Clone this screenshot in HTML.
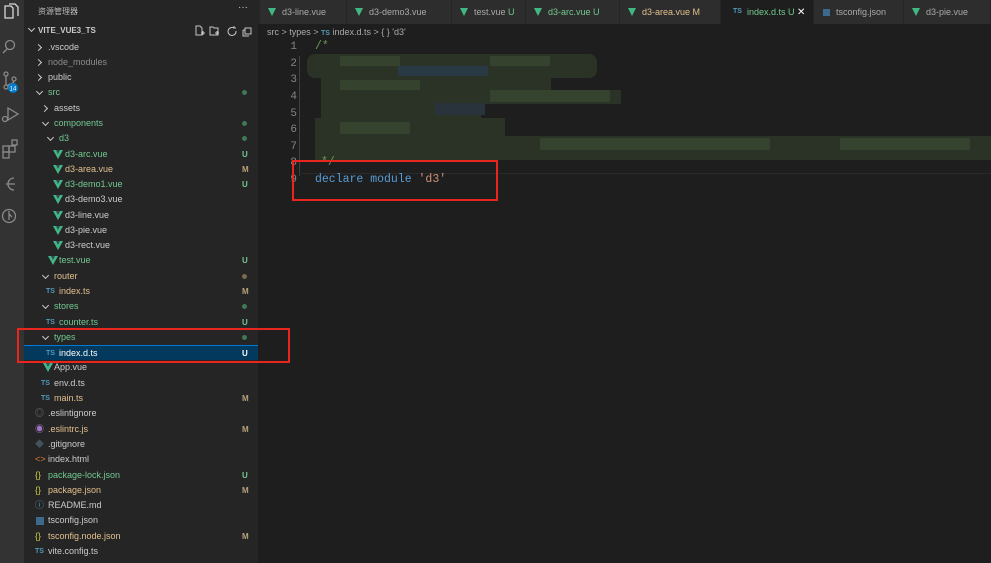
<!DOCTYPE html>
<html><head><meta charset="utf-8"><style>
*{margin:0;padding:0;box-sizing:border-box}
body{width:991px;height:563px;overflow:hidden;background:#1e1e1e;font-family:"Liberation Sans","Noto Sans CJK SC",sans-serif;font-size:9px;color:#ccc;position:relative}
.abs{position:absolute}
#act{left:0;top:0;width:24px;height:563px;background:#333}
#side{left:24px;top:0;width:234px;height:563px;background:#252526}
.r{position:absolute;left:24px;width:234px;height:15px;line-height:15px;white-space:nowrap}
.ch{position:absolute;width:5px;height:5px;border-right:1px solid #ccc;border-bottom:1px solid #ccc}
.ch.o{transform:rotate(45deg);top:4px}
.ch.c{transform:rotate(-45deg);top:5px}
.t{position:absolute;top:0}
.g{color:#73c991}.m{color:#e2c08d}.d{color:#8c8c8c}
.b{position:absolute;left:218px;font-size:8px;font-weight:bold}
.dot{position:absolute;left:218px;top:5px;width:5px;height:5px;border-radius:50%;background:#3e7a52}
.dot.y{background:#7a6a4e}
.v{position:absolute;top:3px;width:0;height:0;border-left:5px solid transparent;border-right:5px solid transparent;border-top:9px solid #41b883}
.v::after{content:"";position:absolute;left:-2px;top:-9px;border-left:2px solid transparent;border-right:2px solid transparent;border-top:4px solid #35495e}
.ts{position:absolute;top:0;font-size:7px;font-weight:bold;color:#519aba}
.tab{position:absolute;top:0;height:24px;line-height:24px;background:#2d2d2d;border-right:1px solid #252526;font-size:9px;color:#aaa;padding-left:22px}
.tab .v{left:8px;top:8px;border-left-width:4px;border-right-width:4px;border-top-width:8px}
.tab .v::after{display:none}
.ln{position:absolute;left:270px;width:27px;text-align:right;color:#858585;font-family:"Liberation Mono",monospace;font-size:11px}
.code{position:absolute;left:315px;font-family:"Liberation Mono",monospace;font-size:11.5px}
.bl{position:absolute;background:#2a3326}
.bk{position:absolute;background:#35432e}
</style></head><body>
<div id="act" class="abs"></div>
<svg class="abs" style="left:0;top:0" width="24" height="240">
<g fill="none" stroke="#d7d7d7" stroke-width="1.3"><path d="M5 6h6l2 2v10H5z M9 4h6l3 3v9"/></g>
<g fill="none" stroke="#8a8a8a" stroke-width="1.3">
<circle cx="10" cy="45" r="4.5"/><path d="M7 49l-4 4"/>
<circle cx="6" cy="74" r="2"/><circle cx="6" cy="87" r="2"/><circle cx="14" cy="79" r="2"/><path d="M6 76v9M14 81c0 3-6 3-7 5"/>
<path d="M8 108l10 6-10 6z"/><circle cx="5" cy="119" r="2.5"/>
<rect x="3" y="146" width="6" height="6"/><rect x="9" y="146" width="6" height="6"/><rect x="3" y="152" width="6" height="6"/><rect x="12" y="140" width="5" height="5"/>
<path d="M14 178a6 6 0 1 0 0 12M6 184h9"/>
<circle cx="9" cy="216" r="6.5"/><path d="M9 211v9M9 214l3 3"/>
</g>
<circle cx="13" cy="88" r="5" fill="#007acc"/><text x="13" y="90.5" font-size="6" fill="#fff" text-anchor="middle" font-family="Liberation Sans">14</text>
</svg>
<div id="side" class="abs"></div>
<div class="abs" style="left:38px;top:6px;font-size:8px;color:#bbb">资源管理器</div>
<div class="abs" style="left:238px;top:2px;color:#ccc;font-size:10px">···</div>
<div class="ch o abs" style="left:29px;top:26px;border-color:#ccc"></div>
<div class="abs" style="left:38px;top:26px;font-size:8px;font-weight:bold;color:#ccc">VITE_VUE3_TS</div>
<svg class="abs" style="left:193px;top:24px" width="60" height="14"><g fill="none" stroke="#c5c5c5" stroke-width="1"><path d="M3 2h4l2 2v7H3z M8 9h4M10 7v4"/><path d="M17 3h3l1 1h4v7h-8z M22 9h4M24 7v4"/><path d="M41 4a4 4 0 1 0 2 3M41 2v2h2"/><path d="M52 4h6v6h-6zM50 6h2M50 6v6h6"/></g></svg>
<div class="r" style="top:40px"><div class="ch c" style="left:12px"></div><span class="t" style="left:24px">.vscode</span></div>
<div class="r" style="top:55px"><div class="ch c" style="left:12px"></div><span class="t d" style="left:24px">node_modules</span></div>
<div class="r" style="top:70px"><div class="ch c" style="left:12px"></div><span class="t" style="left:24px">public</span></div>
<div class="r g" style="top:85px"><div class="ch o" style="left:13px;border-color:#ccc"></div><span class="t" style="left:24px">src</span><div class="dot"></div></div>
<div class="r" style="top:101px"><div class="ch c" style="left:18px"></div><span class="t" style="left:30px">assets</span></div>
<div class="r g" style="top:116px"><div class="ch o" style="left:19px"></div><span class="t" style="left:30px">components</span><div class="dot"></div></div>
<div class="r g" style="top:131px"><div class="ch o" style="left:24px"></div><span class="t" style="left:35px">d3</span><div class="dot"></div></div>
<div class="r g" style="top:147px"><div class="v" style="left:29px"></div><span class="t" style="left:41px">d3-arc.vue</span><span class="b">U</span></div>
<div class="r m" style="top:162px"><div class="v" style="left:29px"></div><span class="t" style="left:41px">d3-area.vue</span><span class="b" style="color:#b8a27a">M</span></div>
<div class="r g" style="top:177px"><div class="v" style="left:29px"></div><span class="t" style="left:41px">d3-demo1.vue</span><span class="b">U</span></div>
<div class="r" style="top:192px"><div class="v" style="left:29px"></div><span class="t" style="left:41px">d3-demo3.vue</span></div>
<div class="r" style="top:208px"><div class="v" style="left:29px"></div><span class="t" style="left:41px">d3-line.vue</span></div>
<div class="r" style="top:223px"><div class="v" style="left:29px"></div><span class="t" style="left:41px">d3-pie.vue</span></div>
<div class="r" style="top:238px"><div class="v" style="left:29px"></div><span class="t" style="left:41px">d3-rect.vue</span></div>
<div class="r g" style="top:253px"><div class="v" style="left:24px"></div><span class="t" style="left:35px">test.vue</span><span class="b">U</span></div>
<div class="r m" style="top:269px"><div class="ch o" style="left:19px"></div><span class="t" style="left:30px">router</span><div class="dot y"></div></div>
<div class="r m" style="top:284px"><span class="ts" style="left:22px">TS</span><span class="t" style="left:35px">index.ts</span><span class="b" style="color:#b8a27a">M</span></div>
<div class="r g" style="top:299px"><div class="ch o" style="left:19px"></div><span class="t" style="left:30px">stores</span><div class="dot"></div></div>
<div class="r g" style="top:315px"><span class="ts" style="left:22px">TS</span><span class="t" style="left:35px">counter.ts</span><span class="b">U</span></div>
<div class="r g" style="top:330px"><div class="ch o" style="left:19px"></div><span class="t" style="left:30px">types</span><div class="dot"></div></div>
<div class="r" style="top:345px;background:#04395e;border-top:1px solid #0078d4;color:#fff"><span class="ts" style="left:22px">TS</span><span class="t" style="left:35px">index.d.ts</span><span class="b" style="color:#fff">U</span></div>
<div class="r" style="top:360px"><div class="v" style="left:19px"></div><span class="t" style="left:30px">App.vue</span></div>
<div class="r" style="top:376px"><span class="ts" style="left:17px">TS</span><span class="t" style="left:30px">env.d.ts</span></div>
<div class="r m" style="top:391px"><span class="ts" style="left:17px">TS</span><span class="t" style="left:30px">main.ts</span><span class="b" style="color:#b8a27a">M</span></div>
<div class="r" style="top:406px"><span class="t" style="left:11px;color:#777">◎</span><span class="t" style="left:24px">.eslintignore</span></div>
<div class="r m" style="top:422px"><span class="t" style="left:11px;color:#a074c4">◉</span><span class="t" style="left:24px">.eslintrc.js</span><span class="b" style="color:#b8a27a">M</span></div>
<div class="r" style="top:437px"><span class="t" style="left:11px;color:#41535b">◆</span><span class="t" style="left:24px">.gitignore</span></div>
<div class="r" style="top:452px"><span class="t" style="left:11px;color:#e37933">&lt;&gt;</span><span class="t" style="left:24px">index.html</span></div>
<div class="r g" style="top:468px"><span class="t" style="left:11px;color:#cbcb41">{}</span><span class="t" style="left:24px">package-lock.json</span><span class="b">U</span></div>
<div class="r m" style="top:483px"><span class="t" style="left:11px;color:#cbcb41">{}</span><span class="t" style="left:24px">package.json</span><span class="b" style="color:#b8a27a">M</span></div>
<div class="r" style="top:498px"><span class="t" style="left:11px;color:#519aba">ⓘ</span><span class="t" style="left:24px">README.md</span></div>
<div class="r" style="top:513px"><span class="t" style="left:12px;top:4px;width:8px;height:8px;background:#3d6a8c"></span><span class="t" style="left:24px">tsconfig.json</span></div>
<div class="r m" style="top:529px"><span class="t" style="left:11px;color:#cbcb41">{}</span><span class="t" style="left:24px">tsconfig.node.json</span><span class="b" style="color:#b8a27a">M</span></div>
<div class="r" style="top:544px"><span class="ts" style="left:11px">TS</span><span class="t" style="left:24px">vite.config.ts</span></div>
<div class="abs" style="left:17px;top:328px;width:273px;height:35px;border:2px solid #e8261e"></div>

<div class="abs" style="left:258px;top:0;width:733px;height:24px;background:#252526"></div>
<div class="tab" style="left:260px;width:87px"><div class="v"></div>d3-line.vue</div>
<div class="tab" style="left:347px;width:105px"><div class="v"></div>d3-demo3.vue</div>
<div class="tab" style="left:452px;width:74px"><div class="v"></div><span>test.vue</span> <span style="color:#73c991">U</span></div>
<div class="tab" style="left:526px;width:94px"><div class="v"></div><span style="color:#73c991">d3-arc.vue U</span></div>
<div class="tab" style="left:620px;width:101px"><div class="v"></div><span style="color:#e2c08d">d3-area.vue M</span></div>
<div class="tab" style="left:721px;width:93px;background:#1e1e1e;padding-left:26px"><span class="ts" style="left:12px;top:0">TS</span><span style="color:#73c991">index.d.ts U</span> <span style="color:#fff;font-size:10px">✕</span></div>
<div class="tab" style="left:814px;width:90px"><span class="abs" style="left:9px;top:9px;width:7px;height:7px;background:#3d6a8c"></span>tsconfig.json</div>
<div class="tab" style="left:904px;width:87px"><div class="v"></div>d3-pie.vue</div>
<div class="abs" style="left:267px;top:27px;color:#aaa;font-size:9px">src &gt; types &gt; <span style="color:#519aba;font-size:7px;font-weight:bold">TS</span> index.d.ts &gt; { } 'd3'</div>

<div class="ln" style="top:41px">1</div><div class="ln" style="top:58px">2</div><div class="ln" style="top:74px">3</div><div class="ln" style="top:91px">4</div><div class="ln" style="top:108px">5</div><div class="ln" style="top:124px">6</div><div class="ln" style="top:141px">7</div><div class="ln" style="top:157px">8</div><div class="ln" style="top:174px">9</div>
<div class="code" style="top:40px;color:#6a9955">/*</div>
<div class="abs" style="left:299px;top:56px;width:1px;height:120px;background:#404040"></div>
<div class="bl" style="left:307px;top:54px;width:290px;height:24px;border-radius:8px"></div>
<div class="bk" style="left:340px;top:56px;width:60px;height:10px"></div>
<div class="bk" style="left:490px;top:56px;width:60px;height:10px"></div>
<div class="abs" style="left:398px;top:66px;width:90px;height:10px;background:#2a3a44"></div>
<div class="bl" style="left:321px;top:78px;width:230px;height:14px"></div>
<div class="bk" style="left:340px;top:80px;width:80px;height:10px"></div>
<div class="bl" style="left:321px;top:90px;width:300px;height:14px"></div>
<div class="bk" style="left:490px;top:90px;width:120px;height:12px"></div>
<div class="bl" style="left:321px;top:102px;width:160px;height:16px"></div>
<div class="abs" style="left:435px;top:103px;width:50px;height:12px;background:#28333b"></div>
<div class="bl" style="left:315px;top:118px;width:190px;height:18px"></div>
<div class="bk" style="left:340px;top:122px;width:70px;height:12px"></div>
<div class="bl" style="left:315px;top:136px;width:676px;height:24px"></div>
<div class="bk" style="left:540px;top:138px;width:230px;height:12px"></div>
<div class="bk" style="left:840px;top:138px;width:130px;height:12px"></div>
<div class="code" style="top:156px;color:#6a9955;left:321px">*/</div>
<div class="abs" style="left:299px;top:173px;width:692px;height:1px;background:#2a2a2a"></div>
<div class="code" style="top:173px"><span style="color:#569cd6">declare module</span> <span style="color:#ce9178">'d3'</span></div>
<div class="abs" style="left:292px;top:160px;width:206px;height:41px;border:2px solid #e8261e"></div>
</body></html>
